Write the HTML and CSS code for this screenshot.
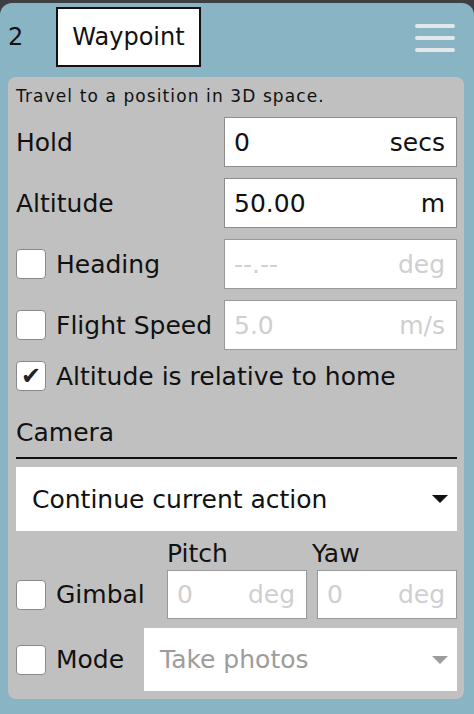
FILE: index.html
```html
<!DOCTYPE html>
<html>
<head>
<meta charset="utf-8">
<link rel="stylesheet" href="styles.css">
</head>
<body>
<div class="outer">
  <div class="header">
    <span class="num">2</span>
    <div class="title">Waypoint</div>
    <div class="menu"><span></span><span></span><span></span></div>
  </div>
  <div class="panel">
    <div class="desc">Travel to a position in 3D space.</div>
    <div class="row">
      <div class="label">Hold</div>
      <div class="field"><span class="val">0</span><span class="unit">secs</span></div>
    </div>
    <div class="row">
      <div class="label">Altitude</div>
      <div class="field"><span class="val">50.00</span><span class="unit">m</span></div>
    </div>
    <div class="row">
      <div class="label"><span class="check"></span>Heading</div>
      <div class="field disabled"><span class="val">--.--</span><span class="unit">deg</span></div>
    </div>
    <div class="row">
      <div class="label"><span class="check"></span>Flight Speed</div>
      <div class="field disabled"><span class="val">5.0</span><span class="unit">m/s</span></div>
    </div>
    <div class="row relrow">
      <div class="label"><span class="check checked">✔</span>Altitude is relative to home</div>
    </div>
    <div class="section">Camera</div>
    <div class="select"><span>Continue current action</span><span class="arrow"></span></div>
    <div class="gimbal-labels"><span>Pitch</span><span>Yaw</span></div>
    <div class="row gimbal">
      <div class="label"><span class="check"></span>Gimbal</div>
      <div class="field disabled small"><span class="val">0</span><span class="unit">deg</span></div>
      <div class="field disabled small"><span class="val">0</span><span class="unit">deg</span></div>
    </div>
    <div class="row moderow">
      <div class="label"><span class="check"></span>Mode</div>
      <div class="select disabled"><span>Take photos</span><span class="arrow"></span></div>
    </div>
  </div>
</div>
</body>
</html>
```
FILE: styles.css
```css
html, body {
  margin: 0;
  padding: 0;
  background: #3d3f40;
  height: 714px;
  overflow: hidden;
}
body {
  font-family: "DejaVu Sans", "Liberation Sans", sans-serif;
  color: #111;
}
.outer {
  margin-top: 3px;
  height: 720px;
  background: #89b4c3;
  border-radius: 12px 12px 8px 8px;
  padding: 0 10px 0 8px;
  box-sizing: border-box;
}
.header {
  height: 74px;
  display: flex;
  align-items: flex-start;
  padding-top: 4px;
  box-sizing: border-box;
}
.num {
  font-size: 24px;
  width: 48px;
  line-height: 60px;
}
.title {
  width: 145px;
  height: 60px;
  box-sizing: border-box;
  border: 2px solid #111;
  background: #fff;
  font-size: 24px;
  display: flex;
  align-items: center;
  justify-content: center;
}
.menu {
  margin-left: auto;
  margin-right: 9px;
  margin-top: 17px;
  width: 40px;
  display: flex;
  flex-direction: column;
  gap: 8px;
}
.menu span {
  height: 4px;
  border-radius: 2px;
  background: #e3e9eb;
}
.panel {
  background: #c0c0c0;
  border-radius: 8px;
  padding: 8px 7px 7px 8px;
  height: 622px;
  box-sizing: border-box;
}
.desc {
  font-size: 17px;
  letter-spacing: 1.1px;
  line-height: 22px;
  margin-bottom: 10px;
}
.row {
  display: flex;
  align-items: center;
  height: 50px;
  margin-bottom: 11px;
}
.label {
  flex: 1;
  display: flex;
  align-items: center;
  font-size: 25px;
}
.check {
  width: 30px;
  height: 30px;
  box-sizing: border-box;
  background: #fff;
  border: 1px solid #8a8a8a;
  border-radius: 4px;
  margin-right: 10px;
  display: flex;
  align-items: center;
  justify-content: center;
  font-size: 24px;
  color: #222;
}
.field {
  width: 233px;
  height: 50px;
  box-sizing: border-box;
  background: #fff;
  border: 1px solid #8d8d8d;
  display: flex;
  align-items: center;
  justify-content: space-between;
  padding: 0 11px 0 9px;
  font-size: 25px;
}
.field.disabled {
  color: #cfcfcf;
  border-color: #9a9a9a;
}
.relrow {
  height: 30px;
  margin-bottom: 0;
}
.section {
  font-size: 25px;
  height: 68px;
  line-height: 26px;
  padding-top: 29px;
  box-sizing: border-box;
  border-bottom: 2px solid #111;
}
.select {
  margin-top: 8px;
  height: 64px;
  background: #fff;
  display: flex;
  align-items: center;
  justify-content: space-between;
  padding: 0 9px 0 16px;
  font-size: 25px;
}
.arrow {
  width: 0;
  height: 0;
  border-left: 8px solid transparent;
  border-right: 8px solid transparent;
  border-top: 8px solid #111;
}
.gimbal-labels {
  display: flex;
  height: 39px;
  padding-left: 151px;
  font-size: 25px;
  align-items: flex-end;
  padding-bottom: 2px;
  box-sizing: border-box;
}
.gimbal-labels span {
  width: 150px;
}
.gimbal {
  height: 49px;
  margin-bottom: 9px;
}
.field.small {
  width: 140px;
  height: 49px;
  margin-left: 10px;
}
.moderow {
  height: 63px;
  margin-bottom: 0;
}
.moderow .label {
  flex: none;
  width: 128px;
}
.select.disabled {
  flex: 1;
  margin-top: 0;
  height: 63px;
  color: #9c9c9c;
  padding-left: 16px;
}
.select.disabled .arrow {
  border-top-color: #9c9c9c;
}
```
